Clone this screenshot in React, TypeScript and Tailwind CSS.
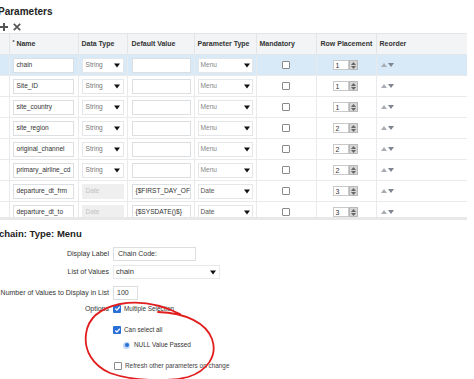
import React from "react";

type Row = {
  name: string;
  dtype: string;
  dateDisabled?: boolean;
  def: string;
  ptype: string;
  place: string;
  active?: boolean;
};

const rows: Row[] = [
  { name: "chain", dtype: "String", def: "", ptype: "Menu", place: "1", active: true },
  { name: "Site_ID", dtype: "String", def: "", ptype: "Menu", place: "1" },
  { name: "site_country", dtype: "String", def: "", ptype: "Menu", place: "1" },
  { name: "site_region", dtype: "String", def: "", ptype: "Menu", place: "2" },
  { name: "original_channel", dtype: "String", def: "", ptype: "Menu", place: "2" },
  { name: "primary_airline_cd", dtype: "String", def: "", ptype: "Menu", place: "2" },
  { name: "departure_dt_frm", dtype: "Date", dateDisabled: true, def: "{$FIRST_DAY_OF_", ptype: "Date", place: "3" },
  { name: "departure_dt_to", dtype: "Date", dateDisabled: true, def: "{$SYSDATE()$}", ptype: "Date", place: "3" },
];

function Arrow() {
  return (
    <svg width="6" height="5" viewBox="0 0 6 5" className="shrink-0">
      <path d="M0 0.5 L6 0.5 L3 4.5 Z" fill="#111" />
    </svg>
  );
}

function Spinner() {
  return (
    <div className="w-[9px] h-[10px] bg-[#d6d6d6] border border-[#b9b9b9] flex flex-col items-center justify-center gap-[1px]">
      <svg width="5" height="3" viewBox="0 0 5 3">
        <path d="M0 3 L5 3 L2.5 0 Z" fill="#666" />
      </svg>
      <svg width="5" height="3" viewBox="0 0 5 3">
        <path d="M0 0 L5 0 L2.5 3 Z" fill="#666" />
      </svg>
    </div>
  );
}

function CheckedBox() {
  return (
    <div className="w-[8px] h-[8px] rounded-[1px] bg-[#2a6fd6] flex items-center justify-center shrink-0">
      <svg width="7" height="7" viewBox="0 0 8 8">
        <path d="M1.5 4 L3.3 5.8 L6.6 2" stroke="#fff" strokeWidth="1.4" fill="none" />
      </svg>
    </div>
  );
}

function EmptyBox() {
  return <div className="w-[8px] h-[8px] rounded-[1px] border border-[#8a8a8a] bg-white shrink-0" />;
}

export default function App() {
  return (
    <div className="relative w-[474px] h-[379px] overflow-hidden bg-white text-[#333] font-['Liberation_Sans',Arial,sans-serif]">
      {/* Title */}
      <div className="h-[21px] pt-[6px] ml-[-2px] text-[10px] font-bold leading-[12px] text-[#222]">Parameters</div>
      {/* toolbar */}
      <div className="h-[12px] flex items-center gap-[4px]">
        <svg width="8" height="8" viewBox="0 0 8 8">
          <path d="M4 0 V8 M0 4 H8" stroke="#555" strokeWidth="2" />
        </svg>
        <svg width="8" height="8" viewBox="0 0 8 8" className="ml-[1px]">
          <path d="M0.8 0.8 L7.2 7.2 M7.2 0.8 L0.8 7.2" stroke="#555" strokeWidth="1.7" />
        </svg>
      </div>

      {/* Table */}
      <div className="w-[467px] h-[187px] overflow-hidden border-b-[3px] border-[#e8e8e8]">
        <table className="table-fixed border-collapse w-[467px] text-[6.6px]">
          <colgroup>
            <col className="w-[9px]" />
            <col className="w-[69px]" />
            <col className="w-[49px]" />
            <col className="w-[67px]" />
            <col className="w-[62px]" />
            <col className="w-[60px]" />
            <col className="w-[60px]" />
            <col className="w-[91px]" />
          </colgroup>
          <thead>
            <tr className="h-[21px] bg-[#f2f4f6] text-[#333] font-bold text-left text-[7px]">
              <th className="border border-[#e3e6e9] border-l-0"></th>
              <th className="border border-[#e3e6e9] pl-[3px] font-bold"><span className="text-[5px] align-top">*</span> Name</th>
              <th className="border border-[#e3e6e9] pl-[3px] font-bold">Data Type</th>
              <th className="border border-[#e3e6e9] pl-[4px] font-bold">Default Value</th>
              <th className="border border-[#e3e6e9] pl-[3px] font-bold whitespace-nowrap">Parameter Type</th>
              <th className="border border-[#e3e6e9] pl-[3px] font-bold">Mandatory</th>
              <th className="border border-[#e3e6e9] pl-[4px] font-bold whitespace-nowrap">Row Placement</th>
              <th className="border border-[#e3e6e9] pl-[3px] font-bold">Reorder</th>
            </tr>
          </thead>
          <tbody>
            {rows.map((r, i) => (
              <tr key={i} className={`h-[21px] ${r.active ? "bg-[#d8e9f8]" : "bg-white"}`}>
                <td className="border border-[#e8eaec] border-l-0"></td>
                <td className="border border-[#e8eaec] pl-[3px] pr-[4px]">
                  <div className="h-[15px] bg-white border border-[#dcdfe2] flex items-center pl-[3px] text-[#333] whitespace-nowrap overflow-hidden">
                    {r.name}
                  </div>
                </td>
                <td className="border border-[#e8eaec] pl-[3px] pr-[3px]">
                  {r.dateDisabled ? (
                    <div className="h-[15px] bg-[#efefef] flex items-center pl-[4px] text-[#c2c2c2]">{r.dtype}</div>
                  ) : (
                    <div className="h-[15px] bg-white border border-[#e4e6e8] flex items-center justify-between pl-[3px] pr-[3px] text-[#777]">
                      <span>{r.dtype}</span>
                      <Arrow />
                    </div>
                  )}
                </td>
                <td className="border border-[#e8eaec] pl-[4px] pr-[3px]">
                  <div className="h-[15px] bg-white border border-[#dcdfe2] flex items-center pl-[3px] text-[#333] whitespace-nowrap overflow-hidden">
                    {r.def}
                  </div>
                </td>
                <td className="border border-[#e8eaec] pl-[3px] pr-[3px]">
                  <div className="h-[15px] bg-white border border-[#e4e6e8] flex items-center justify-between pl-[2px] pr-[2px] text-[#777]">
                    <span className={r.ptype === "Date" ? "text-[#555]" : "text-[#888]"}>{r.ptype}</span>
                    <Arrow />
                  </div>
                </td>
                <td className="border border-[#e8eaec]">
                  <div className="flex justify-center">
                    <EmptyBox />
                  </div>
                </td>
                <td className="border border-[#e8eaec] pl-[16px]">
                  <div className="flex items-center">
                    <div className="w-[16px] h-[10px] bg-white border border-[#c9c9c9] flex items-center pl-[2px] text-[7px] leading-none text-[#333]">
                      {r.place}
                    </div>
                    <Spinner />
                  </div>
                </td>
                <td className="border border-[#e8eaec] pl-[4px]">
                  <div className="flex items-center gap-[1px]">
                    <svg width="6" height="4" viewBox="0 0 6 4">
                      <path d="M0 4 L6 4 L3 0 Z" fill="#a8adb3" />
                    </svg>
                    <svg width="6" height="4" viewBox="0 0 6 4">
                      <path d="M0 0 L6 0 L3 4 Z" fill="#7d8590" />
                    </svg>
                  </div>
                </td>
              </tr>
            ))}
          </tbody>
        </table>
      </div>

      {/* Section header */}
      <div className="mt-[7px] ml-[-1px] h-[14px] text-[9.5px] font-bold leading-[14px] text-[#222]">chain: Type: Menu</div>

      {/* Form */}
      <div className="mt-[6px] flex flex-col text-[7px] text-[#333]">
        <div className="flex items-center h-[14px]">
          <div className="w-[109px] text-right">Display Label</div>
          <div className="ml-[4px] w-[83px] h-[14px] border border-[#dcdfe2] flex items-center pl-[4px]">Chain Code:</div>
        </div>
        <div className="flex items-center h-[14px] mt-[4px]">
          <div className="w-[109px] text-right">List of Values</div>
          <div className="ml-[4px] w-[107px] h-[14px] border border-[#e6e8ea] flex items-center justify-between pl-[2px] pr-[3px]">
            <span className="text-[7.5px]">chain</span>
            <Arrow />
          </div>
        </div>
        <div className="flex items-center h-[14px] mt-[7px]">
          <div className="w-[109px] text-right whitespace-nowrap">Number of Values to Display in List</div>
          <div className="ml-[4px] w-[25px] h-[14px] border border-[#dcdfe2] flex items-center pl-[3px]">100</div>
        </div>
        <div className="flex items-center h-[12px] mt-[3px]">
          <div className="w-[109px] text-right">Options</div>
          <div className="ml-[4px] flex items-center gap-[3px] text-[6.4px]">
            <CheckedBox />
            <span>Multiple Selection</span>
          </div>
        </div>
        <div className="flex items-center h-[12px] mt-[9px] pl-[113px] gap-[3px] text-[6.4px]">
          <CheckedBox />
          <span>Can select all</span>
        </div>
        <div className="flex items-center h-[12px] mt-[3px] pl-[123px] gap-[4px] text-[6.4px]">
          <div className="w-[7px] h-[7px] rounded-full bg-[#bcd6f5] flex items-center justify-center">
            <div className="w-[4px] h-[4px] rounded-full bg-[#2a6fd6]" />
          </div>
          <span>NULL Value Passed</span>
        </div>
        <div className="flex items-center h-[12px] mt-[9px] pl-[114px] gap-[3px] text-[6.4px]">
          <EmptyBox />
          <span className="text-[#444]">Refresh other parameters on change</span>
        </div>
      </div>

      {/* Red hand-drawn annotation */}
      <svg className="absolute inset-0 pointer-events-none" width="474" height="379" viewBox="0 0 474 379">
        <path
          d="M158 312 C 186 313, 206 323, 212 339 C 218 356, 207 371, 188 377 C 168 382, 132 381, 110 373 C 92 365, 84 350, 86 334 C 88 318, 101 308, 120 304 C 142 300, 162 305, 180 314"
          stroke="#e11d1d"
          strokeWidth="1.8"
          fill="none"
          strokeLinecap="round"
        />
      </svg>
    </div>
  );
}
